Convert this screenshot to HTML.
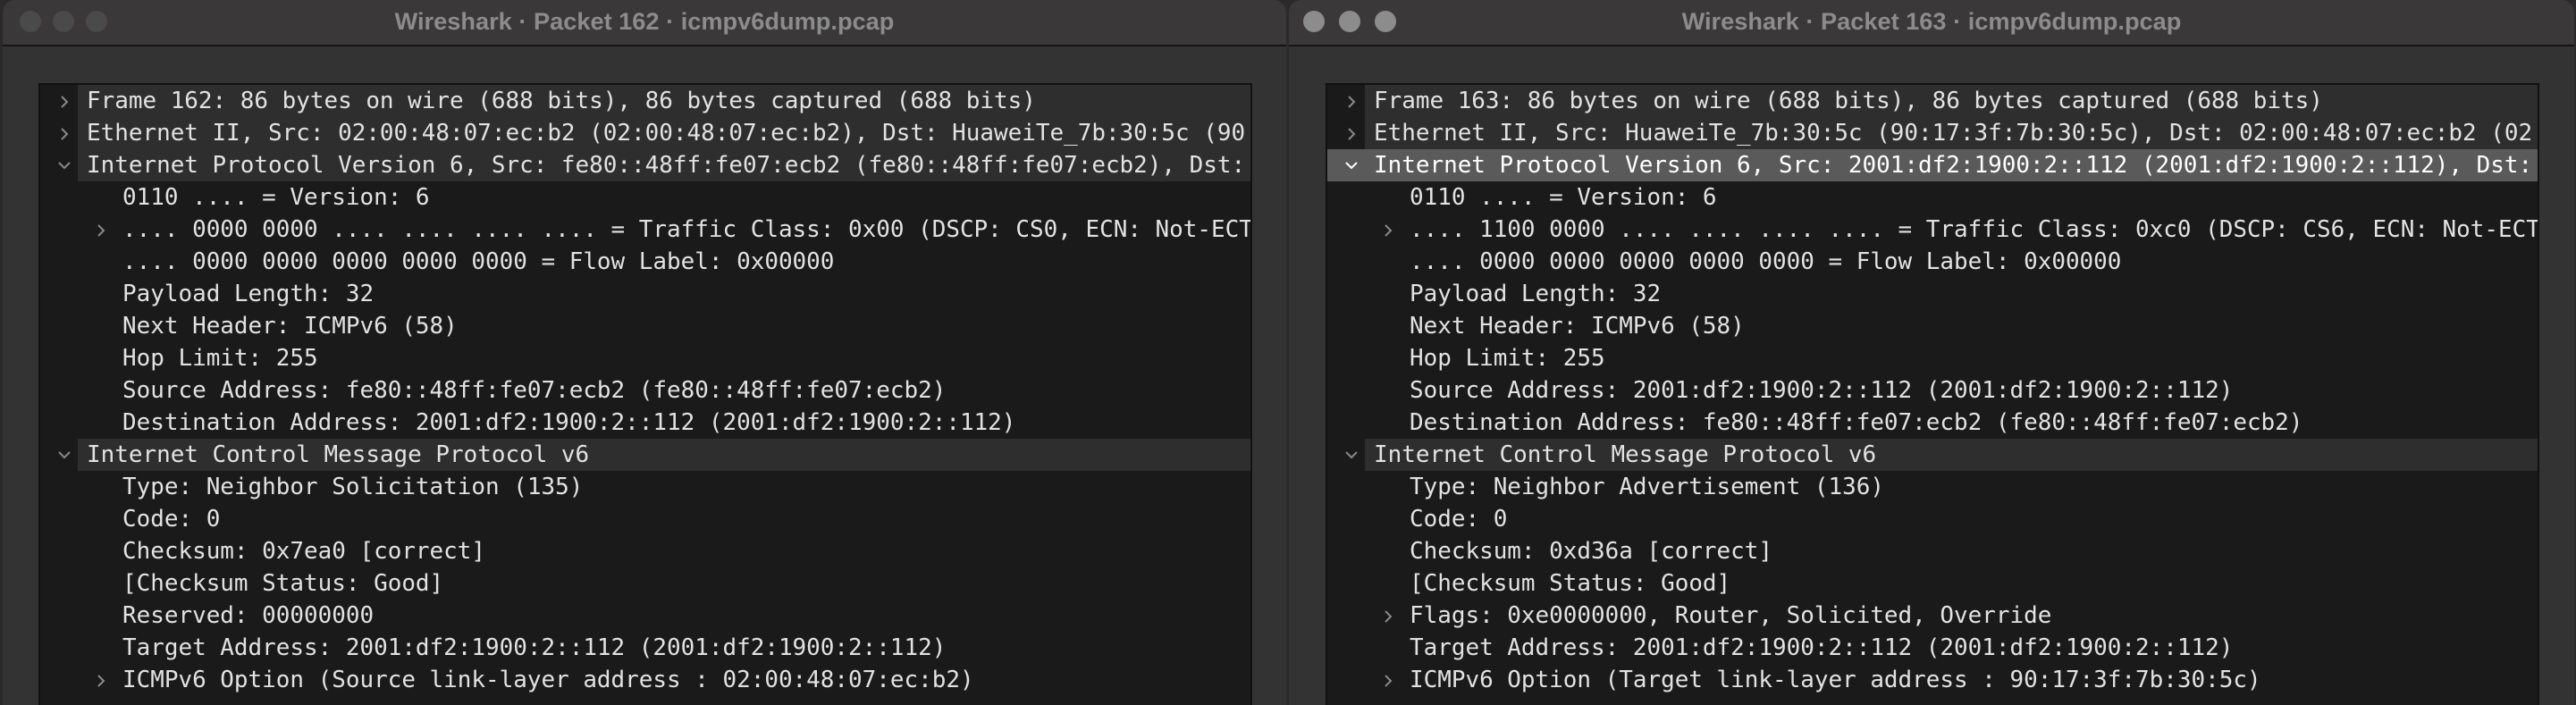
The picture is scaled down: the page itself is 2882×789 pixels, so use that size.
<!DOCTYPE html>
<html><head><meta charset="utf-8"><style>
*{margin:0;padding:0;box-sizing:border-box}
body{width:2882px;height:789px;background:#2a2a2a;overflow:hidden;position:relative;font-family:"DejaVu Sans Mono","Liberation Mono",monospace}
.win{position:absolute;top:0;height:789px;background:#333;border-radius:14px 14px 0 0;overflow:hidden}
.tb{position:absolute;left:0;right:0;top:0;height:52px;background:#3a3838;border-bottom:2px solid #161616}
.tl{position:absolute;top:12px;width:24px;height:24px;border-radius:50%}
.title{position:absolute;top:0;left:0;right:0;text-align:center;line-height:48px;font-family:"Liberation Sans",sans-serif;font-weight:bold;font-size:27.2px;color:#8c8c8c}
.box{position:absolute;top:93px;height:700px;background:#1a1a1a;border:2px solid #111;overflow:hidden}
.row{position:relative;height:36px;line-height:36px;font-size:25.95px;color:#e2e2e2;white-space:pre}
.row.top::before{content:"";position:absolute;left:42px;right:0;top:0;bottom:0;background:#2e2e2e}
.row.sel{background:#5a5a5a;color:#fff}
.row span{position:absolute;top:0}
.row svg{position:absolute;top:11px}
</style></head><body>

<div class="win" style="left:3px;width:1436px">
<div class="tb">
<div class="tl" style="left:19px;background:#4a4a4a"></div>
<div class="tl" style="left:56px;background:#4a4a4a"></div>
<div class="tl" style="left:93px;background:#4a4a4a"></div>
<div class="title">Wireshark · Packet 162 · icmpv6dump.pcap</div>
</div>
<div class="box" style="left:40px;width:1358px">
<div class="row top"><svg style="left:22px" width="10" height="16"><polyline points="2,2 8,8 2,14" fill="none" stroke="#8a8a8a" stroke-width="2"/></svg><span style="left:52px">Frame 162: 86 bytes on wire (688 bits), 86 bytes captured (688 bits)</span></div>
<div class="row top"><svg style="left:22px" width="10" height="16"><polyline points="2,2 8,8 2,14" fill="none" stroke="#8a8a8a" stroke-width="2"/></svg><span style="left:52px">Ethernet II, Src: 02:00:48:07:ec:b2 (02:00:48:07:ec:b2), Dst: HuaweiTe_7b:30:5c (90:17:3f:7b:30:5c)</span></div>
<div class="row top"><svg style="left:19px;top:13px" width="16" height="10"><polyline points="2,2 8,8 14,2" fill="none" stroke="#8a8a8a" stroke-width="2"/></svg><span style="left:52px">Internet Protocol Version 6, Src: fe80::48ff:fe07:ecb2 (fe80::48ff:fe07:ecb2), Dst: 2001:df2:1900:2::112</span></div>
<div class="row"><span style="left:92px">0110 .... = Version: 6</span></div>
<div class="row"><svg style="left:63px" width="10" height="16"><polyline points="2,2 8,8 2,14" fill="none" stroke="#8a8a8a" stroke-width="2"/></svg><span style="left:92px">.... 0000 0000 .... .... .... .... = Traffic Class: 0x00 (DSCP: CS0, ECN: Not-ECT)</span></div>
<div class="row"><span style="left:92px">.... 0000 0000 0000 0000 0000 = Flow Label: 0x00000</span></div>
<div class="row"><span style="left:92px">Payload Length: 32</span></div>
<div class="row"><span style="left:92px">Next Header: ICMPv6 (58)</span></div>
<div class="row"><span style="left:92px">Hop Limit: 255</span></div>
<div class="row"><span style="left:92px">Source Address: fe80::48ff:fe07:ecb2 (fe80::48ff:fe07:ecb2)</span></div>
<div class="row"><span style="left:92px">Destination Address: 2001:df2:1900:2::112 (2001:df2:1900:2::112)</span></div>
<div class="row top"><svg style="left:19px;top:13px" width="16" height="10"><polyline points="2,2 8,8 14,2" fill="none" stroke="#8a8a8a" stroke-width="2"/></svg><span style="left:52px">Internet Control Message Protocol v6</span></div>
<div class="row"><span style="left:92px">Type: Neighbor Solicitation (135)</span></div>
<div class="row"><span style="left:92px">Code: 0</span></div>
<div class="row"><span style="left:92px">Checksum: 0x7ea0 [correct]</span></div>
<div class="row"><span style="left:92px">[Checksum Status: Good]</span></div>
<div class="row"><span style="left:92px">Reserved: 00000000</span></div>
<div class="row"><span style="left:92px">Target Address: 2001:df2:1900:2::112 (2001:df2:1900:2::112)</span></div>
<div class="row"><svg style="left:63px" width="10" height="16"><polyline points="2,2 8,8 2,14" fill="none" stroke="#8a8a8a" stroke-width="2"/></svg><span style="left:92px">ICMPv6 Option (Source link-layer address : 02:00:48:07:ec:b2)</span></div>
</div>
</div>

<div class="win" style="left:1442px;width:1438px">
<div class="tb">
<div class="tl" style="left:16px;background:#8c8c8c"></div>
<div class="tl" style="left:56px;background:#8c8c8c"></div>
<div class="tl" style="left:96px;background:#8c8c8c"></div>
<div class="title">Wireshark · Packet 163 · icmpv6dump.pcap</div>
</div>
<div class="box" style="left:41px;width:1358px">
<div class="row top"><svg style="left:22px" width="10" height="16"><polyline points="2,2 8,8 2,14" fill="none" stroke="#8a8a8a" stroke-width="2"/></svg><span style="left:52px">Frame 163: 86 bytes on wire (688 bits), 86 bytes captured (688 bits)</span></div>
<div class="row top"><svg style="left:22px" width="10" height="16"><polyline points="2,2 8,8 2,14" fill="none" stroke="#8a8a8a" stroke-width="2"/></svg><span style="left:52px">Ethernet II, Src: HuaweiTe_7b:30:5c (90:17:3f:7b:30:5c), Dst: 02:00:48:07:ec:b2 (02:00:48:07:ec:b2)</span></div>
<div class="row sel"><svg style="left:19px;top:13px" width="16" height="10"><polyline points="2,2 8,8 14,2" fill="none" stroke="#fff" stroke-width="2"/></svg><span style="left:52px">Internet Protocol Version 6, Src: 2001:df2:1900:2::112 (2001:df2:1900:2::112), Dst: fe80::48ff:fe07:ecb2</span></div>
<div class="row"><span style="left:92px">0110 .... = Version: 6</span></div>
<div class="row"><svg style="left:63px" width="10" height="16"><polyline points="2,2 8,8 2,14" fill="none" stroke="#8a8a8a" stroke-width="2"/></svg><span style="left:92px">.... 1100 0000 .... .... .... .... = Traffic Class: 0xc0 (DSCP: CS6, ECN: Not-ECT)</span></div>
<div class="row"><span style="left:92px">.... 0000 0000 0000 0000 0000 = Flow Label: 0x00000</span></div>
<div class="row"><span style="left:92px">Payload Length: 32</span></div>
<div class="row"><span style="left:92px">Next Header: ICMPv6 (58)</span></div>
<div class="row"><span style="left:92px">Hop Limit: 255</span></div>
<div class="row"><span style="left:92px">Source Address: 2001:df2:1900:2::112 (2001:df2:1900:2::112)</span></div>
<div class="row"><span style="left:92px">Destination Address: fe80::48ff:fe07:ecb2 (fe80::48ff:fe07:ecb2)</span></div>
<div class="row top"><svg style="left:19px;top:13px" width="16" height="10"><polyline points="2,2 8,8 14,2" fill="none" stroke="#8a8a8a" stroke-width="2"/></svg><span style="left:52px">Internet Control Message Protocol v6</span></div>
<div class="row"><span style="left:92px">Type: Neighbor Advertisement (136)</span></div>
<div class="row"><span style="left:92px">Code: 0</span></div>
<div class="row"><span style="left:92px">Checksum: 0xd36a [correct]</span></div>
<div class="row"><span style="left:92px">[Checksum Status: Good]</span></div>
<div class="row"><svg style="left:63px" width="10" height="16"><polyline points="2,2 8,8 2,14" fill="none" stroke="#8a8a8a" stroke-width="2"/></svg><span style="left:92px">Flags: 0xe0000000, Router, Solicited, Override</span></div>
<div class="row"><span style="left:92px">Target Address: 2001:df2:1900:2::112 (2001:df2:1900:2::112)</span></div>
<div class="row"><svg style="left:63px" width="10" height="16"><polyline points="2,2 8,8 2,14" fill="none" stroke="#8a8a8a" stroke-width="2"/></svg><span style="left:92px">ICMPv6 Option (Target link-layer address : 90:17:3f:7b:30:5c)</span></div>
</div>
</div>
</body></html>
